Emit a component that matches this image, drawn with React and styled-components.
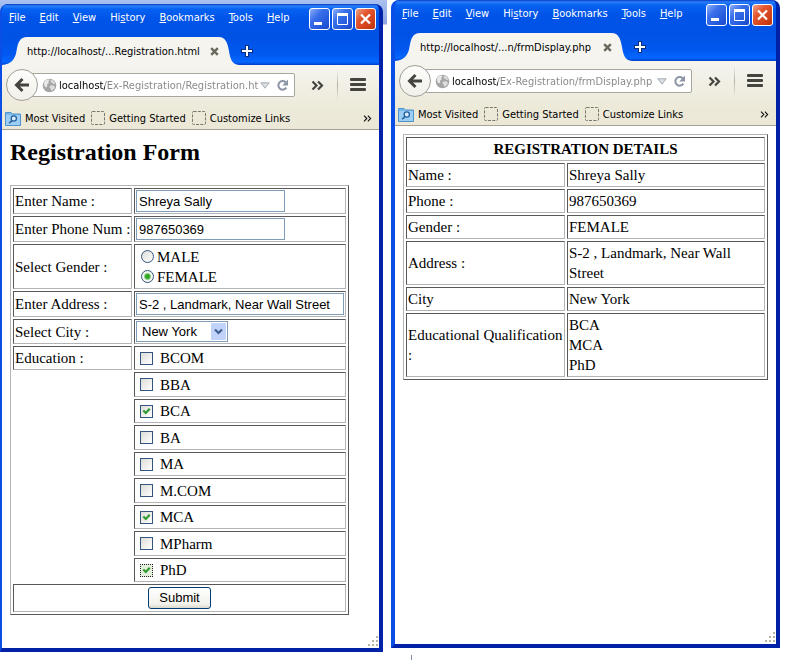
import React from 'react';
import styled, { createGlobalStyle } from 'styled-components';

const UI_FONT = 'Tahoma, "DejaVu Sans Condensed", "Open Sans", sans-serif';

const GlobalStyle = createGlobalStyle`
  * { box-sizing: border-box; }
  body { margin: 0; background: #fff; color: #000; }
  button, input, select { font: inherit; color: inherit; margin: 0; }
`;

const Desktop = styled.main`
  display: flex;
  gap: 4px;
  min-height: 100vh;
  padding-right: 5px;
`;

const Pane = styled.div`
  flex: ${(p) => p.$share} 1 0;
  min-width: 0;
  display: flex;
  flex-direction: column;
  padding: ${(p) => p.$padding};
  background: ${(p) => p.$background || 'none'};
`;

const Caret = styled.i`
  width: 1px;
  height: 5px;
  margin: 7px 0 0 20px;
  background: #8290a8;
`;

const Frame = styled.section`
  flex: 1;
  display: flex;
  flex-direction: column;
  overflow: hidden;
  border: solid;
  border-width: 0 4px 4px ${(p) => p.$leftEdge}px;
  border-color: #0a3fd8 #0022a8 #0022a8 #0a4ee6;
  border-radius: 8px 8px 0 0;
  background: #0054e6;
`;

const TitleArea = styled.header`
  color: #fff;
  font: 11px/13px ${UI_FONT};
  background: linear-gradient(#0a3cc4 0, #2a80fa 2px, #0662f2 5px, #0054e8 14px, #0052e4 34px, #0058f0 50px, #0566ff 58px, #003ec8 61px);
`;

const MenuRow = styled.div`
  display: flex;
  height: 33px;
  padding: 4px 3px 0 7px;
`;

const Menu = styled.nav`
  flex: 1;
  display: flex;
  align-items: center;
  gap: 14px;
  height: 19px;
`;

const MenuItem = styled.button`
  padding: 0;
  border: 0;
  background: none;
  u { text-underline-offset: 1px; }
`;

const Controls = styled.div`
  display: flex;
  gap: 2px;
`;

const ControlButton = styled.button`
  width: 21px;
  height: 22px;
  padding: 0;
  border: 1px solid #fff;
  border-radius: 3px;
  background: ${(p) =>
    p.$close
      ? 'linear-gradient(135deg, #f0a58c 0, #e2572f 35%, #d04018 75%, #b83408 100%)'
      : 'linear-gradient(135deg, #8fb0f8 0, #3a70ea 35%, #2458dc 75%, #1c48c4 100%)'};
  svg { display: block; }
`;

const TabRow = styled.div`
  display: flex;
  height: 28px;
`;

const TabEdge = styled.svg`
  flex: none;
  display: block;
`;

const Tab = styled.div`
  display: flex;
  align-items: center;
  justify-content: space-between;
  width: 192px;
  height: 28px;
  color: #000;
  background: #f5f4ef;
  white-space: nowrap;
`;

const IconButton = styled.button`
  flex: none;
  display: flex;
  padding: 0;
  border: 0;
  background: none;
`;

const NewTab = styled(IconButton)`
  align-self: center;
  margin-left: 2px;
`;

const Toolbars = styled.div`
  color: #000;
  font: 11px/13px ${UI_FONT};
  border-bottom: 1px solid #a5a294;
  background: linear-gradient(#f5f4ef, #ece9d8 48px, #ebe8d8);
`;

const NavRow = styled.div`
  display: flex;
  align-items: center;
  height: 40px;
  padding: 0 13px 0 4px;
`;

const BackButton = styled.button`
  position: relative;
  flex: none;
  display: flex;
  align-items: center;
  justify-content: center;
  width: 32px;
  height: 32px;
  padding: 0;
  border: 1px solid #a09f98;
  border-radius: 50%;
  background: linear-gradient(#fdfdfc, #f1f0e9);
`;

const AddressBar = styled.div`
  flex: 1;
  min-width: 0;
  display: flex;
  align-items: center;
  height: 24px;
  margin-left: -6px;
  padding: 0 5px 0 9px;
  border: 1px solid #a8a79f;
  border-radius: 0 2px 2px 0;
  background: #fff;
`;

const AddressInput = styled.input`
  flex: 1;
  min-width: 0;
  height: 18px;
  padding: 0;
  margin: 0 1px 0 2px;
  border: 0;
  outline: 0;
  background: linear-gradient(90deg, #000 ${(p) => p.$hostWidth}px, #858585 ${(p) => p.$hostWidth}px);
  background-clip: text;
  -webkit-background-clip: text;
  -webkit-text-fill-color: transparent;
`;

const Reload = styled(IconButton)`
  margin-left: 6px;
`;

const More = styled(IconButton)`
  margin: 0 13px 0 16px;
`;

const Separator = styled.span`
  width: 1px;
  height: 32px;
  margin-right: 12px;
  background: linear-gradient(transparent, #b5b2a4, transparent);
`;

const BookmarkRow = styled.div`
  display: flex;
  align-items: center;
  gap: 6px;
  height: 24px;
  padding: 2px 7px 0 3px;
`;

const Bookmark = styled.a`
  display: flex;
  align-items: center;
  gap: 4px;
  color: inherit;
  text-decoration: none;
  white-space: nowrap;
`;

const Overflow = styled(IconButton)`
  margin-left: auto;
`;

const Document = styled.div`
  flex: 1;
  display: flex;
  flex-direction: column;
  padding: 8px 8px 0;
  background: #fff;
  font: 15px/20px "Liberation Serif", "Times New Roman", serif;
`;

const Title = styled.h1`
  margin: 0 0 18px;
  font-size: 24px;
  line-height: 29px;
  font-weight: bold;
`;

const Grip = styled.svg`
  flex: none;
  margin: auto -7px 1px auto;
`;

const Grid = styled.table`
  width: ${(p) => p.$width};
  table-layout: fixed;
  border: 1px solid;
  border-color: #b4b4b4 #585858 #585858 #b4b4b4;
  border-spacing: 2px;
`;

const Column = styled.col`
  width: ${(p) => p.$width};
`;

const Row = styled.tr`
  height: ${(p) => p.$height}px;
`;

const cellBorder = `
  padding: 1px;
  border: 1px solid;
  border-color: #585858 #b4b4b4 #b4b4b4 #585858;
`;

const Cell = styled.td`
  ${cellBorder}
  text-align: ${(p) => p.$align || 'left'};
`;

const LabelCell = styled(Cell)`
  white-space: nowrap;
`;

const HeadCell = styled.th`
  ${cellBorder}
`;

const EmptyCell = styled.td`
  padding: 0;
`;

const TextInput = styled.input`
  display: block;
  width: ${(p) => p.$width};
  height: 22px;
  padding: 0 2px;
  border: 1px solid #7f9db9;
  background: #fff;
  font: 13px/18px "Liberation Sans", Arial, sans-serif;
`;

const SelectBox = styled.div`
  position: relative;
  width: 92px;
  height: 21px;
  border: 1px solid #7f9db9;
`;

const Select = styled.select`
  display: block;
  appearance: none;
  width: 100%;
  height: 19px;
  padding: 0 18px 0 5px;
  border: 0;
  background: #fff;
  font: 13px/19px "Liberation Sans", Arial, sans-serif;
`;

const SelectArrow = styled.svg`
  position: absolute;
  top: 1px;
  right: 1px;
  pointer-events: none;
`;

const Choice = styled.label`
  display: flex;
  align-items: center;
  gap: ${(p) => p.$gap}px;
  padding-left: ${(p) => p.$indent}px;
`;

const Radio = styled.input`
  appearance: none;
  width: 13px;
  height: 13px;
  border: 1px solid #33557f;
  border-radius: 50%;
  background: linear-gradient(135deg, #dcdcd4, #fff);
  &:checked {
    background: radial-gradient(circle, #30a828 0 2px, #8fd088 3px, #f4f6f2 4px);
  }
`;

const Tick = styled.input`
  appearance: none;
  flex: none;
  width: 13px;
  height: 13px;
  grid-area: 1 / 1;
  border: 1px ${(p) => (p.$focused ? 'dotted #222' : 'solid #33557f')};
  background: ${(p) => (p.$focused ? '#e4f0dc' : 'linear-gradient(135deg, #dcdcd7, #fff)')};
  & + svg { visibility: hidden; }
  &:checked + svg { visibility: visible; }
`;

const TickBox = styled.span`
  display: grid;
  place-items: center;
  svg { grid-area: 1 / 1; pointer-events: none; }
`;

const SubmitButton = styled.button`
  display: block;
  width: 63px;
  height: 22px;
  margin: 0 auto;
  padding: 0;
  border: 1px solid #003c74;
  border-radius: 3px;
  background: linear-gradient(#fff, #f3f2ec 80%, #dcd8cc);
  font: 13px/18px "Liberation Sans", Arial, sans-serif;
`;

const MENU = [
  ['', 'F', 'ile'],
  ['', 'E', 'dit'],
  ['', 'V', 'iew'],
  ['Hi', 's', 'tory'],
  ['', 'B', 'ookmarks'],
  ['', 'T', 'ools'],
  ['', 'H', 'elp'],
];

const Globe = () => (
  <svg width="15" height="15" viewBox="0 0 15 15">
    <circle cx="7.5" cy="7.5" r="6.8" fill="#a5a5a5" />
    <path d="M2 4.500C3.200 2.600 4.500 1.700 6.500 1.300L7.400 2.500L6.200 4L6.800 5.300L5 6.600L5.300 8.400L3.800 9.400L2.300 7.800Z" fill="#e9e9e9" />
    <path d="M8.800 1.500L11.800 3L13.300 5.500L11.500 6.300L10.300 4.800L8.700 4.300ZM8.300 7.600L11 7.200L13 8.700L11.800 11.300L9.500 12.800L8.500 10.500L7.300 9Z" fill="#dedede" />
  </svg>
);

const Folder = () => (
  <svg width="16" height="15" viewBox="0 0 16 15">
    <path d="M.5 1.500H6L7.500 3H15.500V14.500H.5Z" fill="#79b8ea" stroke="#4f93cc" />
    <rect x="1" y="4" width="14" height="10" fill="#9ccdf3" />
    <circle cx="8.800" cy="7.500" r="2.600" fill="#d9effd" stroke="#235f9c" strokeWidth="1.300" />
    <path d="M6.900 9.500L4.200 12.200" stroke="#235f9c" strokeWidth="1.600" />
  </svg>
);

const Blank = () => (
  <svg width="14" height="14" viewBox="0 0 14 14">
    <rect x=".5" y=".5" width="13" height="13" rx="1" fill="none" stroke="#77756c" strokeDasharray="3 1.330" />
  </svg>
);

const Chevrons = ({ size = 13, weight = 2.2, color = '#45443f' }) => (
  <svg width={size} height={size} viewBox="0 0 13 13" fill="none" stroke={color} strokeWidth={weight}>
    <path d="M1.500 2.500L5.500 6.500L1.500 10.500M7 2.500L11 6.500L7 10.500" />
  </svg>
);

const BOOKMARKS = [
  ['Most Visited', Folder],
  ['Getting Started', Blank],
  ['Customize Links', Blank],
];

function BrowserWindow({ tab, address, leftEdge, children }) {
  return (
    <Frame $leftEdge={leftEdge}>
      <TitleArea>
        <MenuRow>
          <Menu>
            {MENU.map(([before, key, after]) => (
              <MenuItem key={key} type="button">
                {before}
                <u>{key}</u>
                {after}
              </MenuItem>
            ))}
          </Menu>
          <Controls>
            <ControlButton type="button" aria-label="Minimize">
              <svg width="19" height="20"><rect x="4" y="13" width="8" height="3" fill="#fff" /></svg>
            </ControlButton>
            <ControlButton type="button" aria-label="Maximize">
              <svg width="19" height="20">
                <path d="M4.500 4.500H14.500V15.500H4.500Z" fill="none" stroke="#fff" />
                <rect x="4" y="4" width="11" height="3" fill="#fff" />
              </svg>
            </ControlButton>
            <ControlButton type="button" aria-label="Close" $close>
              <svg width="19" height="20"><path d="M5 5.500L14 14.500M14 5.500L5 14.500" stroke="#fff" strokeWidth="2.200" /></svg>
            </ControlButton>
          </Controls>
        </MenuRow>
        <TabRow>
          <TabEdge width="25" height="28" viewBox="0 0 25 28">
            <path d="M0 28C9 27 13 23 14.500 14C16 5 18 0 25 0V28Z" fill="#f5f4ef" />
          </TabEdge>
          <Tab>
            <span>{tab}</span>
            <IconButton type="button" aria-label="Close tab">
              <svg width="9" height="9"><path d="M1.200 1.200L7.800 7.800M7.800 1.200L1.200 7.800" stroke="#6b695c" strokeWidth="2.400" /></svg>
            </IconButton>
          </Tab>
          <TabEdge width="20" height="28" viewBox="0 0 20 28">
            <path d="M0 0C6 0 8.500 5 10 14C11.500 23 13 27 20 28H0Z" fill="#f5f4ef" />
          </TabEdge>
          <NewTab type="button" aria-label="New tab">
            <svg width="12" height="12">
              <path d="M6 0V12M0 6H12" stroke="#0a2f80" strokeWidth="4" />
              <path d="M6 1V11M1 6H11" stroke="#fff" strokeWidth="2" />
            </svg>
          </NewTab>
        </TabRow>
      </TitleArea>
      <Toolbars>
        <NavRow>
          <BackButton type="button" aria-label="Back">
            <svg width="16" height="16" fill="none" stroke="#45443f" strokeWidth="3">
              <path d="M8.500 2L2.500 8L8.500 14M3 8H15" />
            </svg>
          </BackButton>
          <AddressBar>
            <Globe />
            <AddressInput aria-label="Address" defaultValue={address} $hostWidth={46} />
            <svg width="10" height="7"><path d="M.8.800H9.200L5 6.200Z" fill="#dcdfe4" stroke="#a6abb5" /></svg>
            <Reload type="button" aria-label="Reload">
              <svg width="13" height="13" fill="none">
                <path d="M9.600 3.200A4.300 4.300 0 1 0 10.300 8.600" stroke="#8b95a5" strokeWidth="2" />
                <path d="M12 .5V6.500H6.200Z" fill="#8b95a5" />
              </svg>
            </Reload>
          </AddressBar>
          <More type="button" aria-label="More tools"><Chevrons /></More>
          <Separator />
          <IconButton type="button" aria-label="Open menu">
            <svg width="16" height="14" fill="#45443f">
              <rect width="16" height="3" rx="1" />
              <rect y="5" width="16" height="3" rx="1" />
              <rect y="10" width="16" height="3" rx="1" />
            </svg>
          </IconButton>
        </NavRow>
        <BookmarkRow>
          {BOOKMARKS.map(([name, Icon]) => (
            <Bookmark key={name} href="#">
              <Icon />
              {name}
            </Bookmark>
          ))}
          <Overflow type="button" aria-label="More bookmarks">
            <Chevrons size={9} weight={1.6} color="#111" />
          </Overflow>
        </BookmarkRow>
      </Toolbars>
      <Document>
        {children}
        <Grip width="11" height="11" fill="#b8b4a2">
          <path d="M9 0h2v2h-2zM5 4h2v2h-2zM9 4h2v2h-2zM1 8h2v2h-2zM5 8h2v2h-2zM9 8h2v2h-2z" />
        </Grip>
      </Document>
    </Frame>
  );
}

const COURSES = ['BCOM', 'BBA', 'BCA', 'BA', 'MA', 'M.COM', 'MCA', 'MPharm', 'PhD'];
const CHOSEN = ['BCA', 'MCA', 'PhD'];

function RegistrationForm() {
  return (
    <form onSubmit={(e) => e.preventDefault()}>
      <Title>Registration Form</Title>
      <Grid $width="339px">
        <colgroup>
          <Column $width="119px" />
          <Column />
        </colgroup>
        <tbody>
          <Row $height={26}>
            <LabelCell><label htmlFor="name">Enter Name :</label></LabelCell>
            <Cell><TextInput id="name" $width="149px" defaultValue="Shreya Sally" /></Cell>
          </Row>
          <Row $height={26}>
            <LabelCell><label htmlFor="phone">Enter Phone Num :</label></LabelCell>
            <Cell><TextInput id="phone" $width="149px" defaultValue="987650369" /></Cell>
          </Row>
          <Row $height={45}>
            <LabelCell>Select Gender :</LabelCell>
            <Cell>
              <Choice $gap={3} $indent={5}>
                <Radio type="radio" name="gender" value="MALE" />
                MALE
              </Choice>
              <Choice $gap={3} $indent={5}>
                <Radio type="radio" name="gender" value="FEMALE" defaultChecked />
                FEMALE
              </Choice>
            </Cell>
          </Row>
          <Row $height={26}>
            <LabelCell><label htmlFor="address">Enter Address :</label></LabelCell>
            <Cell><TextInput id="address" $width="100%" defaultValue="S-2 , Landmark, Near Wall Street" /></Cell>
          </Row>
          <Row $height={24}>
            <LabelCell><label htmlFor="city">Select City :</label></LabelCell>
            <Cell>
              <SelectBox>
                <Select id="city" defaultValue="New York">
                  <option>New York</option>
                </Select>
                <SelectArrow width="15" height="17">
                  <rect width="15" height="17" rx="1" fill="#c1d3fb" />
                  <path d="M4 6.500L7.500 10L11 6.500" fill="none" stroke="#3f5f92" strokeWidth="2.200" />
                </SelectArrow>
              </SelectBox>
            </Cell>
          </Row>
          {COURSES.map((course, i) => (
            <Row key={course} $height={i % 2 ? 25 : 24}>
              {i === 0 ? <LabelCell>Education :</LabelCell> : <EmptyCell />}
              <Cell>
                <Choice $gap={7} $indent={4}>
                  <TickBox>
                    <Tick type="checkbox" defaultChecked={CHOSEN.includes(course)} $focused={course === 'PhD'} />
                    <svg width="9" height="9"><path d="M1.300 3.500L3.800 6L7.700 1.700" fill="none" stroke="#2f9a30" strokeWidth="2.200" /></svg>
                  </TickBox>
                  {course}
                </Choice>
              </Cell>
            </Row>
          ))}
          <Row $height={28}>
            <Cell colSpan={2} $align="center">
              <SubmitButton type="submit">Submit</SubmitButton>
            </Cell>
          </Row>
        </tbody>
      </Grid>
    </form>
  );
}

const DETAILS = [
  ['Name :', ['Shreya Sally']],
  ['Phone :', ['987650369']],
  ['Gender :', ['FEMALE']],
  ['Address :', ['S-2 , Landmark, Near Wall Street']],
  ['City', ['New York']],
  ['Educational Qualification :', ['BCA', 'MCA', 'PhD']],
];

function RegistrationDetails() {
  return (
    <Grid $width="100%">
      <colgroup>
        <Column $width="159px" />
        <Column />
      </colgroup>
      <thead>
        <tr>
          <HeadCell colSpan={2}>REGISTRATION DETAILS</HeadCell>
        </tr>
      </thead>
      <tbody>
        {DETAILS.map(([label, lines]) => (
          <tr key={label}>
            <Cell>{label}</Cell>
            <Cell>
              {lines.map((line) => (
                <div key={line}>{line}</div>
              ))}
            </Cell>
          </tr>
        ))}
      </tbody>
    </Grid>
  );
}

export default function App() {
  return (
    <>
      <GlobalStyle />
      <Desktop>
        <Pane $share={383} $padding="4px 4px 8px 0" $background="linear-gradient(#a9c0f0, #8ea4e4 24px, #fff 25px)">
          <BrowserWindow leftEdge={2} tab="http://localhost/...Registration.html" address="localhost/Ex-Registration/Registration.ht">
            <RegistrationForm />
          </BrowserWindow>
        </Pane>
        <Pane $share={389} $padding="0">
          <BrowserWindow leftEdge={4} tab="http://localhost/...n/frmDisplay.php" address="localhost/Ex-Registration/frmDisplay.php">
            <RegistrationDetails />
          </BrowserWindow>
          <Caret />
        </Pane>
      </Desktop>
    </>
  );
}
